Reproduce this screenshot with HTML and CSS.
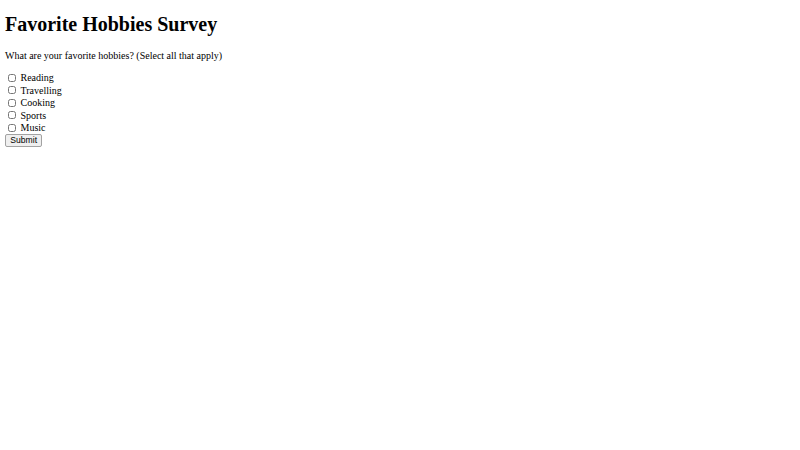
FILE: index.html
```html
<!DOCTYPE html>
<html lang="en">
<head>
<meta charset="utf-8">
<title>Favorite Hobbies Survey</title>
<link rel="stylesheet" href="styles.css">
</head>
<body>
<h1 class="title">Favorite Hobbies Survey</h1>
<form class="survey">
  <p class="question">What are your favorite hobbies? (Select all that apply)</p>
  <div class="option"><input type="checkbox" id="reading" class="check"><label for="reading">Reading</label></div>
  <div class="option"><input type="checkbox" id="travelling" class="check"><label for="travelling">Travelling</label></div>
  <div class="option"><input type="checkbox" id="cooking" class="check"><label for="cooking">Cooking</label></div>
  <div class="option"><input type="checkbox" id="sports" class="check"><label for="sports">Sports</label></div>
  <div class="option"><input type="checkbox" id="music" class="check"><label for="music">Music</label></div>
  <button type="submit" class="submit">Submit</button>
</form>
</body>
</html>
```
FILE: styles.css
```css
html {
  background: #fff;
}
body {
  margin: 0;
  padding: 0 5px;
  font-family: "Liberation Serif", "Times New Roman", serif;
  font-size: 10px;
  color: #000;
}
.title {
  font-size: 20px;
  font-weight: bold;
  margin: 13.4px 0;
  line-height: 23px;
}
.survey {
  margin: 0;
}
.question {
  margin: 10px 0;
  line-height: 11.5px;
}
.option {
  display: flex;
  align-items: center;
  height: 12.5px;
}
.check {
  width: 8px;
  height: 8px;
  margin: 0 5px 0 2.5px;
}
.submit {
  display: block;
  height: 13px;
  font-family: "Liberation Sans", Arial, sans-serif;
  font-size: 8.6px;
  line-height: 10px;
  padding: 0 4.3px;
  margin: 0;
  color: #000;
  background: #efefef;
  border: 1px solid #a2a2a2;
  border-radius: 2px;
}
```
